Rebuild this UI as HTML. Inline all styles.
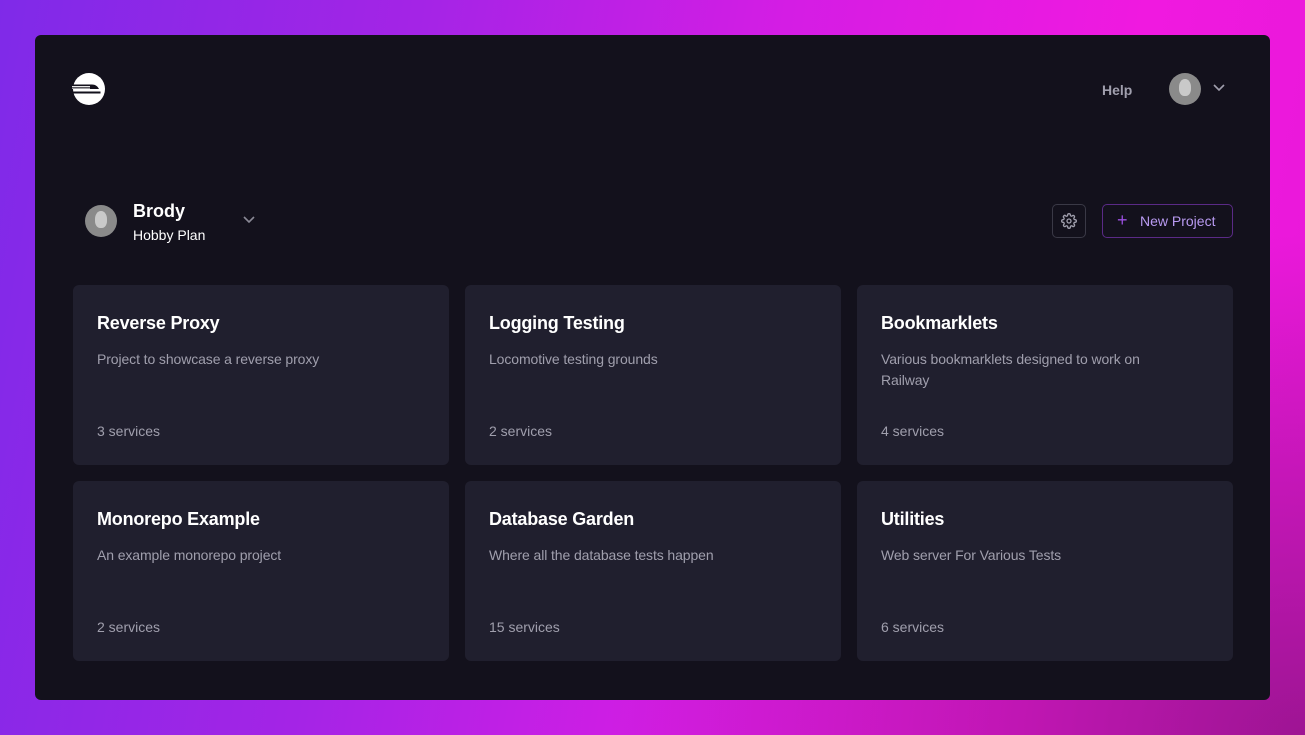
<!DOCTYPE html>
<html><head><style>
*{margin:0;padding:0;box-sizing:border-box}
body{width:1305px;height:735px;overflow:hidden;font-family:"Liberation Sans",sans-serif;
background:radial-gradient(ellipse 700px 500px at 1305px 735px,rgba(150,20,140,0.9),rgba(150,20,140,0) 100%),linear-gradient(100deg,#7f2ae8 0%,#a524e6 30%,#d41de4 55%,#f019e0 80%,#e818d8 100%);position:relative}
.panel{position:absolute;left:35px;top:35px;width:1235px;height:665px;background:#13111c;border-radius:6px}
.card{position:absolute;width:376px;height:180px;background:#201f2e;border-radius:6px}
.card h3{position:absolute;left:24px;top:28px;font-size:18px;font-weight:600;color:#fff;letter-spacing:-0.2px}
.card p{position:absolute;left:24px;top:64px;width:300px;font-size:14px;line-height:21px;color:#a09fad;letter-spacing:-0.1px}
.card span{position:absolute;left:24px;top:138px;font-size:14px;color:#a09fad}
.av{position:absolute;border-radius:50%;background:#8a8a8a;overflow:hidden}
.av::after{content:"";position:absolute;left:30%;top:18%;width:40%;height:55%;background:#c9c9c9;border-radius:45% 45% 40% 40%}
</style></head><body>
<div class="panel">
<svg style="position:absolute;left:37px;top:37px" width="34" height="34" viewBox="0 0 34 34">
<circle cx="17" cy="17" r="16" fill="#fff"/>
<path d="M0 12.5h20c3 0 5.5 1.5 7 4.5H0z" fill="#13111c"/>
<path d="M0 19.5h28.5v2H0z" fill="#13111c"/>
<g fill="#fff"><rect x="0" y="14" width="18" height="0.9"/><rect x="0" y="15.7" width="18" height="0.9"/></g>
</svg>
<div style="position:absolute;left:1067px;top:47px;color:#a09fad;font-size:14px;font-weight:600">Help</div>
<div class="av" style="left:1134px;top:38px;width:32px;height:32px"></div>
<svg style="position:absolute;left:1177px;top:48px" width="14" height="10" viewBox="0 0 14 10"><path d="M2 2l5 5 5-5" stroke="#a09fad" stroke-width="1.6" fill="none"/></svg>
<div class="av" style="left:50px;top:170px;width:32px;height:32px"></div>
<div style="position:absolute;left:98px;top:166px;color:#fff;font-size:18px;font-weight:700">Brody</div>
<div style="position:absolute;left:98px;top:192px;color:#fff;font-size:14px">Hobby Plan</div>
<svg style="position:absolute;left:207px;top:180px" width="14" height="10" viewBox="0 0 14 10"><path d="M2 2l5 5 5-5" stroke="#8a8996" stroke-width="1.6" fill="none"/></svg>
<div style="position:absolute;left:1017px;top:169px;width:34px;height:34px;border:1px solid #3a3946;border-radius:5px"></div>
<svg style="position:absolute;left:1026px;top:178px" width="16" height="16" viewBox="0 0 24 24" fill="none" stroke="#a09fad" stroke-width="2"><circle cx="12" cy="12" r="3"/><path d="M19.4 15a1.65 1.65 0 00.33 1.82l.06.06a2 2 0 11-2.830 2.83l-.06-.06a1.65 1.65 0 00-1.82-.33 1.65 1.65 0 00-1 1.51V21a2 2 0 11-4 0v-.09A1.650 1.650 0 009 19.4a1.65 1.65 0 00-1.820.33l-.06.06a2 2 0 11-2.83-2.830l.06-.06A1.65 1.65 0 004.68 15a1.65 1.65 0 00-1.51-1H3a2 2 0 110-4h.09A1.65 1.65 0 004.6 9a1.65 1.65 0 00-.33-1.82l-.06-.06a2 2 0 112.83-2.83l.06.06A1.65 1.65 0 009 4.68a1.65 1.65 0 001-1.51V3a2 2 0 114 0v.09a1.65 1.65 0 001 1.51 1.65 1.65 0 001.82-.33l.06-.06a2 2 0 112.83 2.83l-.06.06A1.65 1.65 0 0019.4 9a1.65 1.65 0 001.51 1H21a2 2 0 110 4h-.09a1.65 1.65 0 00-1.51 1z"/></svg>
<div style="position:absolute;left:1067px;top:169px;width:131px;height:34px;border:1px solid #5a2a86;border-radius:5px;color:#b89af0;font-size:14px;line-height:32px;padding-left:37px">New Project</div>
<div style="position:absolute;left:1082px;top:178px;color:#9b4fe0;font-size:18px;line-height:14px">+</div>

<div class="card" style="left:38px;top:250px"><h3>Reverse Proxy</h3><p>Project to showcase a reverse proxy</p><span>3 services</span></div>
<div class="card" style="left:430px;top:250px"><h3>Logging Testing</h3><p>Locomotive testing grounds</p><span>2 services</span></div>
<div class="card" style="left:822px;top:250px"><h3>Bookmarklets</h3><p>Various bookmarklets designed to work on Railway</p><span>4 services</span></div>
<div class="card" style="left:38px;top:446px"><h3>Monorepo Example</h3><p>An example monorepo project</p><span>2 services</span></div>
<div class="card" style="left:430px;top:446px"><h3>Database Garden</h3><p>Where all the database tests happen</p><span>15 services</span></div>
<div class="card" style="left:822px;top:446px"><h3>Utilities</h3><p>Web server For Various Tests</p><span>6 services</span></div>
</div>
</body></html>
